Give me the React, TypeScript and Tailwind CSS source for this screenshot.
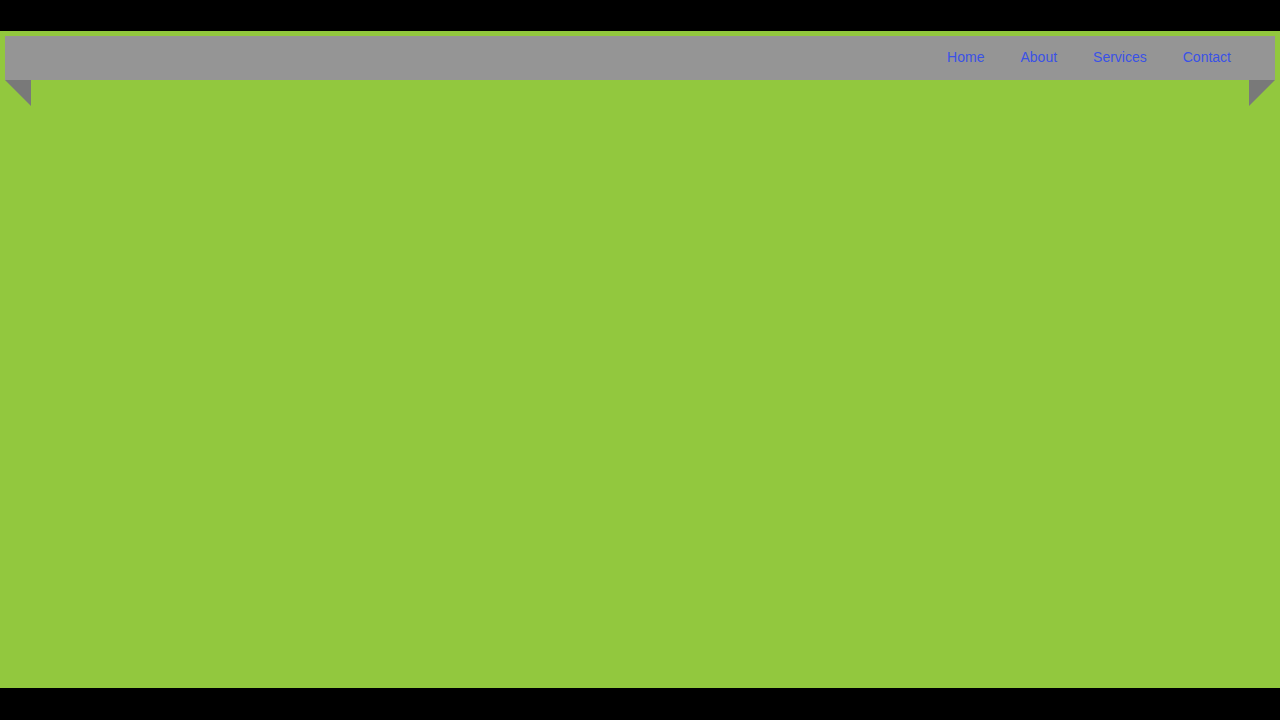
import React from "react";

const links = ["Home", "About", "Services", "Contact"];

export default function App() {
  return (
    <div className="h-[720px] w-full bg-black pt-[31px] pb-[32px] font-['Liberation_Sans',Arial,sans-serif]">
      <div className="h-full bg-[#92c83e] px-[5px] pt-[5px]">
        <header className="relative">
          <nav className="flex h-[44px] items-center justify-end bg-[#959595] pr-[26px] pb-[2px]">
            <ul className="flex">
              {links.map((l) => (
                <li key={l}>
                  <a href="#" className="block px-[18px] text-[14px] text-[#3a52e6]">
                    {l}
                  </a>
                </li>
              ))}
            </ul>
          </nav>
          <svg className="absolute left-0 top-full" width="26" height="26" viewBox="0 0 26 26">
            <polygon points="0,0 26,0 26,26" fill="#797979" />
          </svg>
          <svg className="absolute right-0 top-full" width="26" height="26" viewBox="0 0 26 26">
            <polygon points="0,0 26,0 0,26" fill="#797979" />
          </svg>
        </header>
      </div>
    </div>
  );
}
